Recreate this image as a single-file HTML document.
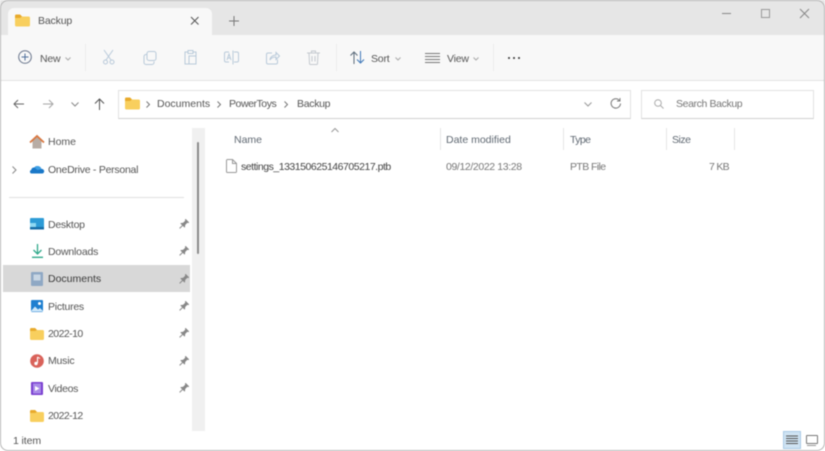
<!DOCTYPE html>
<html><head><meta charset="utf-8"><style>
html,body{margin:0;padding:0;width:825px;height:451px;overflow:hidden;background:#fff}
#w{position:relative;width:825px;height:451px;overflow:hidden;background:#fff;font-family:"Liberation Sans",sans-serif;color:#555;font-size:10.5px;filter:blur(.5px)}
.a{position:absolute}
.t{position:absolute;white-space:nowrap;line-height:14px}
svg{position:absolute;overflow:visible}
.p{position:absolute;left:178px;width:11px;height:11px}
</style></head><body><div id="w">
<div class="a" style="left:0;top:0;width:825px;height:35px;background:#e6e6e6"></div>
<div class="a" style="left:8px;top:8px;width:204px;height:27px;background:#f8f8f8;border-radius:6px 6px 0 0"></div>
<div class="a" style="left:0;top:35px;width:825px;height:45px;background:#f8f8f8;border-bottom:1px solid #e3e3e3"></div>
<div class="a" style="left:0;top:0;width:823px;height:449px;border:1px solid #b5b5b5;border-radius:8px"></div>

<svg style="left:15px;top:14px" width="15" height="13"><path d="M0 2a1.500 1.500 0 0 1 1.500-1.500h3.500l2 2h6.500a1.500 1.500 0 0 1 1.500 1.500v7a1.500 1.500 0 0 1-1.500 1.500h-12a1.500 1.500 0 0 1-1.500-1.500z" fill="#f8cf5e"/><path d="M0 2a1.500 1.500 0 0 1 1.500-1.500h3.500l2 2-2 1.500h-5z" fill="#e8aa2c"/></svg>
<div class="t" style="left:38px;top:14px;letter-spacing:-.15px">Backup</div>
<svg style="left:190px;top:16px" width="10" height="10"><path d="M1 1l7.500 7.500M8.500 1l-7.500 7.500" stroke="#555" fill="none"/></svg>
<svg style="left:229px;top:16px" width="10" height="10"><path d="M5 0v10M0 5h10" stroke="#777" fill="none"/></svg>
<div class="a" style="left:722px;top:13px;width:9px;height:1px;background:#888"></div>
<div class="a" style="left:761px;top:9px;width:7px;height:7px;border:1px solid #999"></div>
<svg style="left:800px;top:9px" width="9" height="9"><path d="M0 0l9 9M9 0l-9 9" stroke="#888" fill="none"/></svg>

<svg style="left:18px;top:50px" width="14" height="14"><circle cx="7" cy="7" r="6.300" fill="none" stroke="#66738a" stroke-width="1"/><path d="M7 3.500v7M3.500 7h7" stroke="#4f6f9a" fill="none"/></svg>
<div class="t" style="left:40px;top:52px;letter-spacing:-.2px">New</div>
<svg style="left:65px;top:57px" width="6" height="4"><path d="M.5.500l2.500 2.500 2.500-2.500" stroke="#aaa" fill="none"/></svg>
<div class="a" style="left:85px;top:44px;width:1px;height:27px;background:#ececec"></div>
<svg style="left:102px;top:50px" width="14" height="15" fill="none" stroke="#b9cada"><path d="M2 0l7 10M11 0l-7 10"/><circle cx="3.500" cy="12" r="2"/><circle cx="10" cy="12" r="2"/></svg>
<svg style="left:143px;top:51px" width="14" height="14" fill="none" stroke="#b9cada"><rect x="4" y=".5" width="9" height="9" rx="2"/><path d="M4 3.500h-1a2 2 0 0 0-2 2v6a2 2 0 0 0 2 2h6a2 2 0 0 0 2-2v-1"/></svg>
<svg style="left:184px;top:50px" width="13" height="15" fill="none" stroke="#b9cada"><path d="M4 2h-3v12h11v-12h-3"/><rect x="4" y=".5" width="5" height="3"/><rect x="5" y="6" width="7" height="8"/></svg>
<svg style="left:224px;top:50px" width="15" height="15" fill="none" stroke="#b9cada"><path d="M5 2h-3a1.500 1.500 0 0 0-1.500 1.500v7a1.500 1.500 0 0 0 1.500 1.500h3M10 2h3a1.500 1.500 0 0 1 1.500 1.500v7a1.500 1.500 0 0 1-1.500 1.500h-3M9 .5v14M3 10l2-6 2 6M3.700 8h2.600"/></svg>
<svg style="left:266px;top:51px" width="14" height="14" fill="none" stroke="#b9cada"><path d="M6 2h-4a1.500 1.500 0 0 0-1.500 1.500v8a1.500 1.500 0 0 0 1.500 1.500h8a1.500 1.500 0 0 0 1.500-1.500v-3M4 9c0-3 3-5 6-5v-2.500l3.500 3.500-3.500 3.500v-2.500c-3 0-5 1-6 3z"/></svg>
<svg style="left:307px;top:50px" width="13" height="15" fill="none" stroke="#c4c9cf"><path d="M0 3h13M4.500 3v-2h4v2M2 3l.5 10.500a1 1 0 0 0 1 1h6a1 1 0 0 0 1-1l.5-10.500M5 6v5.500M8 6v5.500"/></svg>
<div class="a" style="left:336px;top:44px;width:1px;height:27px;background:#ececec"></div>
<svg style="left:350px;top:51px" width="15" height="13" fill="none"><path d="M4 13v-12M.5 4.500l3.500-3.500 3.500 3.500" stroke="#5a6a7a"/><path d="M10.500 0v12M7 8.500l3.500 3.500 3.500-3.500" stroke="#3f78b8"/></svg>
<div class="t" style="left:371px;top:52px;letter-spacing:-.2px">Sort</div>
<svg style="left:395px;top:57px" width="6" height="4"><path d="M.5.500l2.500 2.500 2.500-2.500" stroke="#aaa" fill="none"/></svg>
<svg style="left:425px;top:52px" width="15" height="11" stroke="#777"><path d="M0 1.500h15M0 4.500h15M0 7.500h15M0 10.500h15"/></svg>
<div class="t" style="left:447px;top:52px;letter-spacing:-.2px">View</div>
<svg style="left:473px;top:57px" width="6" height="4"><path d="M.5.500l2.500 2.500 2.500-2.500" stroke="#aaa" fill="none"/></svg>
<div class="a" style="left:493px;top:44px;width:1px;height:27px;background:#ececec"></div>
<div class="a" style="left:508px;top:57px;width:2px;height:2px;background:#333;box-shadow:5px 0 #333,10px 0 #333;border-radius:1px"></div>

<svg style="left:13px;top:99px" width="11" height="10" fill="none" stroke="#666"><path d="M11 5h-10M5 1l-4 4 4 4"/></svg>
<svg style="left:43px;top:99px" width="11" height="10" fill="none" stroke="#a5a5a5"><path d="M0 5h10M6 1l4 4-4 4"/></svg>
<svg style="left:71px;top:102px" width="8" height="5" fill="none" stroke="#888"><path d="M.5.500l3.500 3.500 3.500-3.500"/></svg>
<svg style="left:94px;top:98px" width="11" height="12" fill="none" stroke="#555"><path d="M5.500 12v-11M1 5.500l4.500-4.500 4.500 4.500"/></svg>
<div class="a" style="left:118px;top:90px;width:511px;height:27px;border:1px solid #e2e2e2;border-bottom-color:#d0d0d0;background:#fff"></div>
<svg style="left:125px;top:97px" width="15" height="13"><path d="M0 2a1.500 1.500 0 0 1 1.500-1.500h3.500l2 2h6.500a1.500 1.500 0 0 1 1.500 1.500v7a1.500 1.500 0 0 1-1.500 1.500h-12a1.500 1.500 0 0 1-1.500-1.500z" fill="#f8cf5e"/><path d="M0 2a1.500 1.500 0 0 1 1.500-1.500h3.500l2 2-2 1.500h-5z" fill="#e8aa2c"/></svg>
<svg style="left:146px;top:101px" width="4" height="7" fill="none" stroke="#777"><path d="M.5.500l3 3-3 3"/></svg>
<div class="t" style="left:157px;top:97px">Documents</div>
<svg style="left:217px;top:101px" width="4" height="7" fill="none" stroke="#777"><path d="M.5.500l3 3-3 3"/></svg>
<div class="t" style="left:229px;top:97px;letter-spacing:-.45px">PowerToys</div>
<svg style="left:284px;top:101px" width="4" height="7" fill="none" stroke="#777"><path d="M.5.500l3 3-3 3"/></svg>
<div class="t" style="left:297px;top:97px;letter-spacing:-.3px">Backup</div>
<svg style="left:584px;top:102px" width="8" height="5" fill="none" stroke="#999"><path d="M.5.500l3.500 3.500 3.500-3.500"/></svg>
<svg style="left:610px;top:98px" width="11" height="11" fill="none" stroke="#777"><path d="M9.500 2.500a4.700 4.700 0 1 0 1 3"/><path d="M10 0v3h-3" stroke-width=".9"/></svg>
<div class="a" style="left:641px;top:90px;width:171px;height:27px;border:1px solid #e2e2e2;border-bottom-color:#d0d0d0;background:#fff"></div>
<svg style="left:654px;top:99px" width="10" height="10" fill="none" stroke="#aaa"><circle cx="4" cy="4" r="3.300"/><path d="M6.500 6.500l3 3"/></svg>
<div class="t" style="left:676px;top:97px;color:#777;letter-spacing:-.38px">Search Backup</div>

<svg style="left:30px;top:135px" width="14" height="14"><path d="M2.500 6v7.500h9v-7.500l-4.500-4z" fill="#b8aca4"/><path d="M0 7.500l7-6.500 7 6.500" fill="none" stroke="#d9773f" stroke-width="1.800"/></svg>
<div class="t" style="left:48px;top:135px">Home</div>
<svg style="left:12px;top:166px" width="5" height="8" fill="none" stroke="#888"><path d="M.5.500l3.500 3.500-3.500 3.500"/></svg>
<svg style="left:30px;top:164px" width="14" height="10"><path d="M1.500 9.500a1.800 1.800 0 0 1-.3-3.500 3 3 0 0 1 3-2.500 4 4 0 0 1 7 1.500 2.300 2.300 0 0 1 1.300 4.500z" fill="#1a78c8"/><path d="M4.500 3.500a4 4 0 0 1 7 1.500l-4 1z" fill="#3fa0e5"/></svg>
<div class="t" style="left:48px;top:163px;letter-spacing:-.26px">OneDrive - Personal</div>
<div class="a" style="left:9px;top:197px;width:175px;height:1px;background:#e0e0e0"></div>

<svg style="left:30px;top:218px" width="14" height="12"><rect x="0" y="0" width="14" height="11" rx="1" fill="#2d9bd6"/><rect x="0" y="9" width="14" height="2.500" fill="#176ea8"/><path d="M0 5h6v4h-6z" fill="#8fd8f2"/></svg>
<div class="t" style="left:48px;top:218px;letter-spacing:-.25px">Desktop</div>
<svg style="left:32px;top:244px" width="11" height="14" fill="none" stroke="#2fa88a" stroke-width="1.300"><path d="M5.500 0v10M1.500 6l4 4 4-4M0 13.300h11"/></svg>
<div class="t" style="left:48px;top:245px;letter-spacing:-.2px">Downloads</div>
<div class="a" style="left:3px;top:265px;width:187px;height:27px;background:#d8d8d8"></div>
<svg style="left:31px;top:272px" width="13" height="14"><rect width="12" height="14" rx="1" fill="#8fa8c4"/><rect x="2.500" y="2.500" width="7" height="6" fill="#c8d6e4"/></svg>
<div class="t" style="left:48px;top:272px;color:#3a3a3a">Documents</div>
<svg style="left:31px;top:300px" width="12" height="12"><rect width="12" height="12" rx="1" fill="#1e7fd0"/><path d="M0 11l4-4.500 3 3 2-1.500 3 3v.500h-12z" fill="#cfe8fa"/><circle cx="8.500" cy="3.500" r="1.500" fill="#fff"/></svg>
<div class="t" style="left:48px;top:300px;letter-spacing:-.25px">Pictures</div>
<svg style="left:30px;top:328px" width="14" height="12"><path d="M0 1.500a1.500 1.500 0 0 1 1.500-1.500h3.500l2 2h5.500a1.500 1.500 0 0 1 1.500 1.500v7a1.500 1.500 0 0 1-1.500 1.500h-11a1.500 1.500 0 0 1-1.500-1.500z" fill="#f8cf5e"/><path d="M0 1.500a1.500 1.500 0 0 1 1.500-1.500h3.500l2 2-2 1h-5z" fill="#e8aa2c"/></svg>
<div class="t" style="left:48px;top:327px;letter-spacing:-.55px">2022-10</div>
<svg style="left:30px;top:354px" width="14" height="14"><circle cx="7" cy="7" r="6.800" fill="#d9625a"/><path d="M7.500 3v6" stroke="#fff" stroke-width="1.100"/><circle cx="6" cy="9.500" r="1.700" fill="#fff"/><path d="M7.500 3l2.500 1.500" stroke="#fff"/></svg>
<div class="t" style="left:48px;top:354px;letter-spacing:-.2px">Music</div>
<svg style="left:31px;top:382px" width="12" height="13"><rect width="12" height="13" rx="1" fill="#7a3fd0"/><rect x="2" y="1.500" width="8" height="10" fill="#a98ae8"/><path d="M4 4l4.500 2.500-4.500 2.500z" fill="#fff"/></svg>
<div class="t" style="left:48px;top:382px;letter-spacing:-.3px">Videos</div>
<svg style="left:30px;top:410px" width="14" height="12"><path d="M0 1.500a1.500 1.500 0 0 1 1.500-1.500h3.500l2 2h5.500a1.500 1.500 0 0 1 1.500 1.500v7a1.500 1.500 0 0 1-1.500 1.500h-11a1.500 1.500 0 0 1-1.500-1.500z" fill="#f8cf5e"/><path d="M0 1.500a1.500 1.500 0 0 1 1.500-1.500h3.500l2 2-2 1h-5z" fill="#e8aa2c"/></svg>
<div class="t" style="left:48px;top:409px;letter-spacing:-.55px">2022-12</div>

<svg class="p" style="top:219px" viewBox="0 0 11 11"><path d="M3 0h5v1l-1 .5v3l1.500 2v.5h-6v-.5l1.500-2v-3l-1-.5zM5 7h1v4h-1z" fill="#888" transform="rotate(45 5.500 5.500)"/></svg>
<svg class="p" style="top:246px" viewBox="0 0 11 11"><path d="M3 0h5v1l-1 .5v3l1.500 2v.5h-6v-.5l1.500-2v-3l-1-.5zM5 7h1v4h-1z" fill="#888" transform="rotate(45 5.500 5.500)"/></svg>
<svg class="p" style="top:274px" viewBox="0 0 11 11"><path d="M3 0h5v1l-1 .5v3l1.500 2v.5h-6v-.5l1.500-2v-3l-1-.5zM5 7h1v4h-1z" fill="#888" transform="rotate(45 5.500 5.500)"/></svg>
<svg class="p" style="top:301px" viewBox="0 0 11 11"><path d="M3 0h5v1l-1 .5v3l1.500 2v.5h-6v-.5l1.500-2v-3l-1-.5zM5 7h1v4h-1z" fill="#888" transform="rotate(45 5.500 5.500)"/></svg>
<svg class="p" style="top:328px" viewBox="0 0 11 11"><path d="M3 0h5v1l-1 .5v3l1.500 2v.5h-6v-.5l1.500-2v-3l-1-.5zM5 7h1v4h-1z" fill="#888" transform="rotate(45 5.500 5.500)"/></svg>
<svg class="p" style="top:356px" viewBox="0 0 11 11"><path d="M3 0h5v1l-1 .5v3l1.500 2v.5h-6v-.5l1.500-2v-3l-1-.5zM5 7h1v4h-1z" fill="#888" transform="rotate(45 5.500 5.500)"/></svg>
<svg class="p" style="top:383px" viewBox="0 0 11 11"><path d="M3 0h5v1l-1 .5v3l1.500 2v.5h-6v-.5l1.500-2v-3l-1-.5zM5 7h1v4h-1z" fill="#888" transform="rotate(45 5.500 5.500)"/></svg>

<div class="a" style="left:192px;top:128px;width:13px;height:303px;background:#f0f0f0"></div>
<div class="a" style="left:197px;top:142px;width:2px;height:112px;background:#8c8c8c;border-radius:1px"></div>

<svg style="left:331px;top:128px" width="8" height="5" fill="none" stroke="#999"><path d="M.5 4l3.500-3.500 3.500 3.500"/></svg>
<div class="t" style="left:234px;top:133px;color:#5f6872">Name</div>
<div class="a" style="left:440px;top:128px;width:1px;height:22px;background:#e6e6e6"></div>
<div class="t" style="left:446px;top:133px;color:#5f6872">Date modified</div>
<div class="a" style="left:563px;top:128px;width:1px;height:22px;background:#e6e6e6"></div>
<div class="t" style="left:570px;top:133px;color:#5f6872;letter-spacing:-.6px">Type</div>
<div class="a" style="left:666px;top:128px;width:1px;height:22px;background:#e6e6e6"></div>
<div class="t" style="left:672px;top:133px;color:#5f6872;letter-spacing:-.5px">Size</div>
<div class="a" style="left:734px;top:128px;width:1px;height:22px;background:#e6e6e6"></div>

<svg style="left:226px;top:159px" width="11" height="14" fill="#fff" stroke="#999"><path d="M.5 1.500a1 1 0 0 1 1-1h5l4 4v8a1 1 0 0 1-1 1h-8a1 1 0 0 1-1-1z"/><path d="M6.500.5v4h4" fill="none"/></svg>
<div class="t" style="left:241px;top:160px;color:#444;letter-spacing:-.48px">settings_133150625146705217.ptb</div>
<div class="t" style="left:446px;top:160px;color:#777;letter-spacing:-.38px">09/12/2022 13:28</div>
<div class="t" style="left:570px;top:160px;color:#777;letter-spacing:-.6px">PTB File</div>
<div class="t" style="left:709px;top:160px;color:#777;letter-spacing:-.7px">7 KB</div>

<div class="t" style="left:13px;top:434px;letter-spacing:-.1px">1 item</div>
<div class="a" style="left:783px;top:431px;width:18px;height:18px;background:#cfe3f3;border:1px solid #a9cbe6;box-sizing:border-box"></div>
<svg style="left:786px;top:435px" width="12" height="10" stroke="#555"><path d="M0 1h12M0 3.500h12M0 6h12M0 8.500h12"/></svg>
<div class="a" style="left:806px;top:435px;width:10px;height:7px;border:1px solid #777;border-radius:1px"></div>
<div class="a" style="left:807px;top:445px;width:9px;height:1px;background:#999"></div>
</div></body></html>
